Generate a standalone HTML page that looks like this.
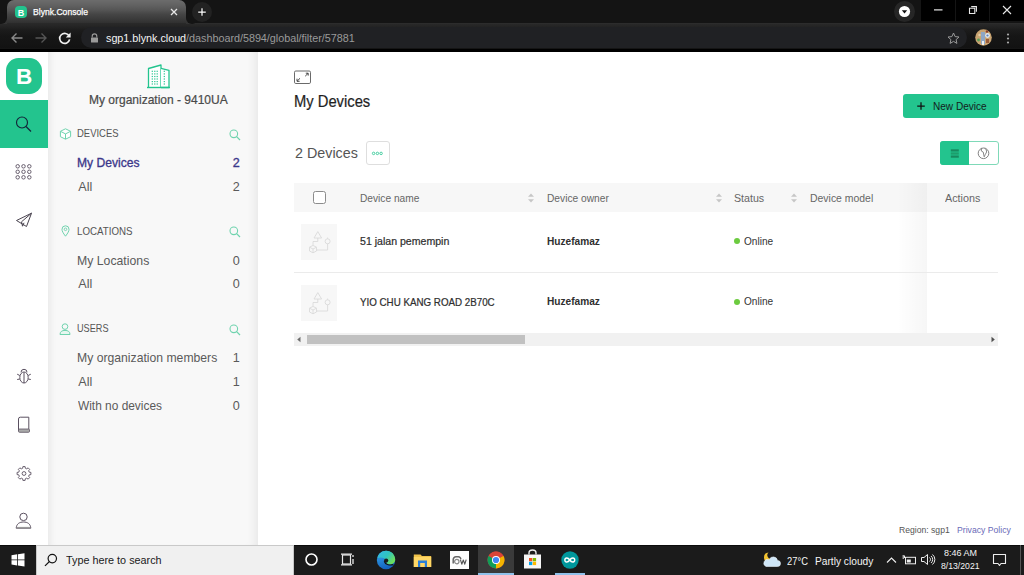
<!DOCTYPE html>
<html><head><meta charset="utf-8"><title>Blynk.Console</title>
<style>
html,body{margin:0;padding:0;width:1024px;height:575px;overflow:hidden;background:#fff;font-family:"Liberation Sans", sans-serif;}
.r{position:absolute;box-sizing:content-box;}
svg.r{overflow:visible}
.t{position:absolute;white-space:nowrap;font-family:"Liberation Sans", sans-serif;}
</style></head><body>
<div class="r" style="left:0px;top:0px;width:1024px;height:24px;background:#141414"></div>
<div class="r" style="left:7px;top:0px;width:179px;height:25px;border-radius:7px 7px 0 0;background:linear-gradient(#6c6c6c 0px,#626262 5px,#555 10px,#464646 14px,#3a3a3a 19px,#2c2c2c 25px)"></div>
<div class="r" style="left:0px;top:23px;width:1024px;height:26px;background:linear-gradient(#2a2a2a 0px,#252525 3px,#1c1c1c 7px,#161616 13px,#121212 26px)"></div>
<div class="r" style="left:0px;top:23px;width:7px;height:1px;background:#2c2c2c"></div>
<div class="r" style="left:186px;top:23px;width:838px;height:1px;background:#2c2c2c"></div>
<div class="r" style="left:0px;top:48px;width:1024px;height:1px;background:#151515"></div>
<div class="r" style="left:0px;top:49px;width:1024px;height:3px;background:#000"></div>
<div class="r" style="left:1px;top:18px;width:6px;height:6px;background:#333"></div>
<div class="r" style="left:-5px;top:12px;width:12px;height:12px;border-radius:50%;background:#141414"></div>
<div class="r" style="left:186px;top:18px;width:6px;height:6px;background:#333"></div>
<div class="r" style="left:186px;top:12px;width:12px;height:12px;border-radius:50%;background:#141414"></div>
<svg class="r" style="left:15px;top:6px;" width="12" height="12" viewBox="0 0 12 12"><rect x="0" y="0" width="12" height="12" rx="4" fill="#23c48e"/><text x="6" y="9.6" font-family="Liberation Sans" font-weight="700" font-size="9" fill="#fff" text-anchor="middle">B</text></svg>
<div class="t" style="left:33.10px;top:6.80px;font-size:9.8px;line-height:9.8px;color:#ffffff;font-weight:400;transform:scaleX(0.8769);transform-origin:0 0;-webkit-text-stroke:0.25px #fff">Blynk.Console</div>
<svg class="r" style="left:170px;top:8px;" width="8" height="8" viewBox="0 0 8 8"><path d="M1 1L7 7M7 1L1 7" stroke="#e8e8e8" stroke-width="1.3"/></svg>
<svg class="r" style="left:192px;top:2px;" width="20" height="20" viewBox="0 0 20 20"><circle cx="10" cy="10" r="10" fill="#222"/><path d="M10 6.2V13.8M6.2 10H13.8" stroke="#000" stroke-width="2.6" opacity="0.5"/><path d="M10 6.2V13.8M6.2 10H13.8" stroke="#fff" stroke-width="1.25"/></svg>
<svg class="r" style="left:894px;top:1px;" width="21" height="21" viewBox="0 0 21 21"><circle cx="10.5" cy="10.5" r="10.5" fill="#262626"/><circle cx="10.5" cy="10.5" r="5.6" fill="#fff"/><path d="M7.8 9.2H13.2L10.5 12.6Z" fill="#111"/></svg>
<div class="r" style="left:921px;top:0px;width:103px;height:21px;background:#000"></div>
<div class="r" style="left:955px;top:0px;width:1px;height:21px;background:#151515"></div>
<div class="r" style="left:989px;top:0px;width:1px;height:21px;background:#151515"></div>
<svg class="r" style="left:934px;top:9px;" width="9" height="2" viewBox="0 0 9 2"><rect x="0" y="0.3" width="8.5" height="1.2" fill="#e8e8e8"/></svg>
<svg class="r" style="left:967px;top:5px;" width="11" height="10" viewBox="0 0 11 10"><path d="M2.5 3.2H7.8V8.5H2.5Z" fill="none" stroke="#e8e8e8" stroke-width="1.1"/><path d="M4.2 1.6H9.4V6.8" fill="none" stroke="#e8e8e8" stroke-width="1.1"/></svg>
<svg class="r" style="left:1002px;top:5px;" width="10" height="10" viewBox="0 0 10 10"><path d="M1 1L9 9M9 1L1 9" stroke="#e8e8e8" stroke-width="1.1"/></svg>
<svg class="r" style="left:10px;top:31px;" width="14" height="14" viewBox="0 0 14 14"><path d="M12.5 7H2M6.5 2.5L2 7L6.5 11.5" fill="none" stroke="#8a8a8a" stroke-width="1.4"/></svg>
<svg class="r" style="left:34px;top:31px;" width="14" height="14" viewBox="0 0 14 14"><path d="M1.5 7H12M7.5 2.5L12 7L7.5 11.5" fill="none" stroke="#555" stroke-width="1.4"/></svg>
<svg class="r" style="left:58px;top:31px;" width="14" height="14" viewBox="0 0 14 14"><path d="M11.2 5.2A5 5 0 1 0 11.6 8.4" fill="none" stroke="#f0f0f0" stroke-width="1.7"/><path d="M12.6 1.6V6.4H7.8Z" fill="#f0f0f0"/></svg>
<div class="r" style="left:81px;top:27px;width:886px;height:21px;border-radius:11px;background:#202124"></div>
<svg class="r" style="left:90px;top:33px;" width="9" height="10" viewBox="0 0 9 10"><path d="M2.2 4.5V3.2A2.3 2.3 0 0 1 6.8 3.2V4.5" fill="none" stroke="#9a9a9a" stroke-width="1.1"/><rect x="1" y="4.4" width="7" height="5.2" rx="0.6" fill="#9a9a9a"/></svg>
<div class="t" style="left:106.00px;top:33.06px;font-size:10.8px;line-height:10.8px;color:#f4f4f4;font-weight:400;letter-spacing:-0.02px;"><span style="color:#f4f4f4">sgp1.blynk.cloud</span><span style="color:#9a9a9a">/dashboard/5894/global/filter/57881</span></div>
<svg class="r" style="left:947px;top:32px;" width="13" height="12" viewBox="0 0 13 12"><path d="M6.5 1L8.1 4.6L12 5L9.1 7.6L9.9 11.4L6.5 9.4L3.1 11.4L3.9 7.6L1 5L4.9 4.6Z" fill="none" stroke="#9a9a9a" stroke-width="1"/></svg>
<svg class="r" style="left:975px;top:29px;" width="17" height="17" viewBox="0 0 17 17"><defs><clipPath id="av"><circle cx="8.5" cy="8.5" r="8.3"/></clipPath></defs><g clip-path="url(#av)"><rect width="17" height="17" fill="#c9a472"/><rect x="6" y="3" width="4" height="12" fill="#8fa6c4"/><circle cx="12.5" cy="6.5" r="2.4" fill="#dfe8f2"/><circle cx="12.5" cy="6.5" r="1.1" fill="#5b7fb6"/><rect x="11" y="10" width="3" height="4" fill="#9a5a3a"/><circle cx="3.5" cy="11" r="1.4" fill="#5aa05a"/><circle cx="4.5" cy="6" r="1.2" fill="#e2cfa8"/><rect x="7" y="12" width="2" height="4" fill="#f0f0f0"/><circle cx="12" cy="2.5" r="1.2" fill="#8a3a2a"/></g></svg>
<svg class="r" style="left:1006px;top:33px;" width="4" height="11" viewBox="0 0 4 11"><circle cx="2" cy="1.5" r="1.1" fill="#aaa"/><circle cx="2" cy="5.5" r="1.1" fill="#aaa"/><circle cx="2" cy="9.5" r="1.1" fill="#aaa"/></svg>
<div class="r" style="left:0px;top:52px;width:1024px;height:493px;background:#fff"></div>
<div class="r" style="left:0px;top:52px;width:48px;height:493px;background:#fff"></div>
<svg class="r" style="left:6px;top:58px;" width="36" height="36" viewBox="0 0 36 36"><rect x="0" y="0" width="36" height="36" rx="12.5" fill="#23c48e"/><text x="18" y="26.2" font-family="Liberation Sans" font-weight="700" font-size="22.5" fill="#fff" text-anchor="middle">B</text></svg>
<div class="r" style="left:0px;top:100px;width:48px;height:48px;background:#23c48e"></div>
<svg class="r" style="left:14px;top:115px;" width="20" height="20" viewBox="0 0 20 20"><circle cx="8" cy="7.5" r="5.5" fill="none" stroke="#13263a" stroke-width="1.15"/><path d="M12 11.5L17 16.5" stroke="#13263a" stroke-width="1.2"/></svg>
<svg class="r" style="left:14px;top:163px;" width="20" height="18" viewBox="0 0 20 18"><circle cx="3.6999999999999993" cy="3.3000000000000114" r="1.75" fill="none" stroke="#625868" stroke-width="0.95"/><circle cx="3.6999999999999993" cy="8.800000000000011" r="1.75" fill="none" stroke="#625868" stroke-width="0.95"/><circle cx="3.6999999999999993" cy="14.300000000000011" r="1.75" fill="none" stroke="#625868" stroke-width="0.95"/><circle cx="9.5" cy="3.3000000000000114" r="1.75" fill="none" stroke="#625868" stroke-width="0.95"/><circle cx="9.5" cy="8.800000000000011" r="1.75" fill="none" stroke="#625868" stroke-width="0.95"/><circle cx="9.5" cy="14.300000000000011" r="1.75" fill="none" stroke="#625868" stroke-width="0.95"/><circle cx="15.3" cy="3.3000000000000114" r="1.75" fill="none" stroke="#625868" stroke-width="0.95"/><circle cx="15.3" cy="8.800000000000011" r="1.75" fill="none" stroke="#625868" stroke-width="0.95"/><circle cx="15.3" cy="14.300000000000011" r="1.75" fill="none" stroke="#625868" stroke-width="0.95"/></svg>
<svg class="r" style="left:15px;top:212px;" width="18" height="16" viewBox="0 0 18 16"><path d="M1.5 8.5L16.5 1.2L11.5 14.5Z M16.5 1.2L6.5 9.8L7.5 14.2L9 10.8" fill="none" stroke="#4a4450" stroke-width="1" stroke-linejoin="round"/></svg>
<svg class="r" style="left:16px;top:367px;" width="16" height="18" viewBox="0 0 16 18"><ellipse cx="8" cy="10.5" rx="4.2" ry="5.5" fill="none" stroke="#5a5060" stroke-width="1"/><path d="M5 5.3A3 3 0 0 1 11 5.3" fill="none" stroke="#5a5060" stroke-width="1"/><path d="M8 5.5V16M3.8 8.5L1.2 7.2M12.2 8.5L14.8 7.2M3.8 12L1.2 12.5M12.2 12L14.8 12.5" stroke="#5a5060" stroke-width="1"/></svg>
<svg class="r" style="left:16px;top:416px;" width="16" height="18" viewBox="0 0 16 18"><path d="M2.5 14.5V3A1.8 1.8 0 0 1 4.3 1.2H12.8V13" fill="none" stroke="#5a5060" stroke-width="1"/><rect x="2.5" y="13" width="11" height="3.3" rx="1" fill="#aaa" stroke="#5a5060" stroke-width="0.8"/></svg>
<svg class="r" style="left:15.7px;top:465.5px;" width="17" height="16" viewBox="0 0 17 16"><path d="M6.90 0.59 L9.10 0.59 L9.34 2.27 L10.75 2.85 L12.11 1.84 L13.66 3.39 L12.65 4.75 L13.23 6.16 L14.91 6.40 L14.91 8.60 L13.23 8.84 L12.65 10.25 L13.66 11.61 L12.11 13.16 L10.75 12.15 L9.34 12.73 L9.10 14.41 L6.90 14.41 L6.66 12.73 L5.25 12.15 L3.89 13.16 L2.34 11.61 L3.35 10.25 L2.77 8.84 L1.09 8.60 L1.09 6.40 L2.77 6.16 L3.35 4.75 L2.34 3.39 L3.89 1.84 L5.25 2.85 L6.66 2.27Z" fill="none" stroke="#5a5060" stroke-width="0.9" stroke-linejoin="round"/><circle cx="8" cy="7.5" r="1.9" fill="none" stroke="#5a5060" stroke-width="0.9"/></svg>
<svg class="r" style="left:15px;top:512px;" width="17" height="18" viewBox="0 0 17 18"><circle cx="8.5" cy="4.9" r="3.7" fill="none" stroke="#5a5060" stroke-width="1"/><path d="M1.2 16.2C1.5 11.8 4.5 10 8.5 10S15.5 11.8 15.8 16.2Z" fill="#fff" stroke="#5a5060" stroke-width="1"/><path d="M1.6 15.6H15.4" stroke="#9a9a9a" stroke-width="1.4"/></svg>
<div class="r" style="left:48px;top:52px;width:210px;height:493px;background:#f8f8f8;box-shadow:inset 7px 0 7px -5px rgba(0,0,0,0.07), inset -10px 0 10px -7px rgba(0,0,0,0.07)"></div>
<svg class="r" style="left:147px;top:64px;" width="24" height="25" viewBox="0 0 24 25"><path d="M1.5 23.5V4.5L14 1V23.5" fill="#fff" stroke="#23c48e" stroke-width="1.3" stroke-linejoin="round"/><path d="M14 4.3L22 6.3V23.5H14" fill="#fff" stroke="#23c48e" stroke-width="1.3" stroke-linejoin="round"/><path d="M0 23.5H23" stroke="#23c48e" stroke-width="1.4"/><rect x="4.7" y="6.7" width="1.2" height="1.2" fill="#23c48e"/><rect x="4.7" y="9.3" width="1.2" height="1.2" fill="#23c48e"/><rect x="4.7" y="11.9" width="1.2" height="1.2" fill="#23c48e"/><rect x="4.7" y="14.4" width="1.2" height="1.2" fill="#23c48e"/><rect x="4.7" y="17.0" width="1.2" height="1.2" fill="#23c48e"/><rect x="4.7" y="19.4" width="1.2" height="1.2" fill="#23c48e"/><rect x="7.2" y="6.7" width="1.2" height="1.2" fill="#23c48e"/><rect x="7.2" y="9.3" width="1.2" height="1.2" fill="#23c48e"/><rect x="7.2" y="11.9" width="1.2" height="1.2" fill="#23c48e"/><rect x="7.2" y="14.4" width="1.2" height="1.2" fill="#23c48e"/><rect x="7.2" y="17.0" width="1.2" height="1.2" fill="#23c48e"/><rect x="7.2" y="19.4" width="1.2" height="1.2" fill="#23c48e"/><rect x="9.6" y="6.7" width="1.2" height="1.2" fill="#23c48e"/><rect x="9.6" y="9.3" width="1.2" height="1.2" fill="#23c48e"/><rect x="9.6" y="11.9" width="1.2" height="1.2" fill="#23c48e"/><rect x="9.6" y="14.4" width="1.2" height="1.2" fill="#23c48e"/><rect x="9.6" y="17.0" width="1.2" height="1.2" fill="#23c48e"/><rect x="9.6" y="19.4" width="1.2" height="1.2" fill="#23c48e"/><rect x="16.7" y="6.7" width="1.2" height="1.2" fill="#23c48e"/><rect x="16.7" y="9.3" width="1.2" height="1.2" fill="#23c48e"/><rect x="16.7" y="11.9" width="1.2" height="1.2" fill="#23c48e"/><rect x="16.7" y="14.4" width="1.2" height="1.2" fill="#23c48e"/><rect x="16.7" y="17.0" width="1.2" height="1.2" fill="#23c48e"/><rect x="16.7" y="19.4" width="1.2" height="1.2" fill="#23c48e"/></svg>
<div class="t" style="left:88.86px;top:94.16px;font-size:12.8px;line-height:12.8px;color:#4a4a4a;font-weight:400;transform:scaleX(0.9375);transform-origin:0 0;-webkit-text-stroke:0.22px currentColor">My organization - 9410UA</div>
<svg class="r" style="left:59px;top:128px;" width="13" height="12" viewBox="0 0 13 12"><path d="M6.5 0.8L11.6 3.3V8.7L6.5 11.2L1.4 8.7V3.3Z" fill="#fff" stroke="#6fd3ae" stroke-width="1"/><path d="M1.6 3.4L6.5 5.9L11.4 3.4M6.5 5.9V11" fill="none" stroke="#6fd3ae" stroke-width="1"/></svg>
<div class="t" style="left:76.80px;top:128.19px;font-size:11px;line-height:11px;color:#555;font-weight:400;transform:scaleX(0.8591);transform-origin:0 0;">DEVICES</div>
<svg class="r" style="left:228.5px;top:128.5px;" width="12" height="12" viewBox="0 0 12 12"><circle cx="4.8" cy="4.8" r="3.8" fill="none" stroke="#6fd3ae" stroke-width="1.1"/><path d="M7.6 7.6L11 11" stroke="#6fd3ae" stroke-width="1.2"/></svg>
<svg class="r" style="left:61px;top:225px;" width="9" height="12" viewBox="0 0 9 12"><path d="M4.5 11.2C2 8 1 6 1 4.3A3.5 3.5 0 0 1 8 4.3C8 6 7 8 4.5 11.2Z" fill="none" stroke="#6fd3ae" stroke-width="1"/><circle cx="4.5" cy="4.3" r="1.3" fill="none" stroke="#6fd3ae" stroke-width="0.9"/></svg>
<div class="t" style="left:76.80px;top:225.69px;font-size:11px;line-height:11px;color:#555;font-weight:400;transform:scaleX(0.8844);transform-origin:0 0;">LOCATIONS</div>
<svg class="r" style="left:228.5px;top:226px;" width="12" height="12" viewBox="0 0 12 12"><circle cx="4.8" cy="4.8" r="3.8" fill="none" stroke="#6fd3ae" stroke-width="1.1"/><path d="M7.6 7.6L11 11" stroke="#6fd3ae" stroke-width="1.2"/></svg>
<svg class="r" style="left:59px;top:323px;" width="12" height="12" viewBox="0 0 12 12"><circle cx="6" cy="3.6" r="2.8" fill="none" stroke="#6fd3ae" stroke-width="1"/><path d="M1 11.5C1 8.6 3 7.4 6 7.4S11 8.6 11 11.5Z" fill="#e6f7f0" stroke="#6fd3ae" stroke-width="1"/></svg>
<div class="t" style="left:76.80px;top:322.89px;font-size:11px;line-height:11px;color:#555;font-weight:400;transform:scaleX(0.8306);transform-origin:0 0;">USERS</div>
<svg class="r" style="left:228.5px;top:323.5px;" width="12" height="12" viewBox="0 0 12 12"><circle cx="4.8" cy="4.8" r="3.8" fill="none" stroke="#6fd3ae" stroke-width="1.1"/><path d="M7.6 7.6L11 11" stroke="#6fd3ae" stroke-width="1.2"/></svg>
<div class="t" style="left:77.34px;top:156.93px;font-size:12.6px;line-height:12.6px;color:#3b378a;font-weight:400;transform:scaleX(0.9611);transform-origin:0 0;-webkit-text-stroke:0.32px currentColor">My Devices</div>
<div class="t" style="left:232.80px;top:156.93px;font-size:12.6px;line-height:12.6px;color:#3b378a;font-weight:400;letter-spacing:0px;-webkit-text-stroke:0.32px currentColor">2</div>
<div class="t" style="left:78.30px;top:181.03px;font-size:12.6px;line-height:12.6px;color:#5a5a5a;font-weight:400;letter-spacing:-0.05px;">All</div>
<div class="t" style="left:232.80px;top:181.03px;font-size:12.6px;line-height:12.6px;color:#5a5a5a;font-weight:400;letter-spacing:0px;">2</div>
<div class="t" style="left:77.33px;top:254.93px;font-size:12.6px;line-height:12.6px;color:#5a5a5a;font-weight:400;transform:scaleX(0.9739);transform-origin:0 0;">My Locations</div>
<div class="t" style="left:232.80px;top:254.93px;font-size:12.6px;line-height:12.6px;color:#5a5a5a;font-weight:400;letter-spacing:0px;">0</div>
<div class="t" style="left:78.30px;top:278.33px;font-size:12.6px;line-height:12.6px;color:#5a5a5a;font-weight:400;letter-spacing:-0.05px;">All</div>
<div class="t" style="left:232.80px;top:278.33px;font-size:12.6px;line-height:12.6px;color:#5a5a5a;font-weight:400;letter-spacing:0px;">0</div>
<div class="t" style="left:77.33px;top:352.03px;font-size:12.6px;line-height:12.6px;color:#5a5a5a;font-weight:400;transform:scaleX(0.9681);transform-origin:0 0;">My organization members</div>
<div class="t" style="left:232.80px;top:352.03px;font-size:12.6px;line-height:12.6px;color:#5a5a5a;font-weight:400;letter-spacing:0px;">1</div>
<div class="t" style="left:78.30px;top:375.83px;font-size:12.6px;line-height:12.6px;color:#5a5a5a;font-weight:400;letter-spacing:-0.05px;">All</div>
<div class="t" style="left:232.80px;top:375.83px;font-size:12.6px;line-height:12.6px;color:#5a5a5a;font-weight:400;letter-spacing:0px;">1</div>
<div class="t" style="left:78.30px;top:399.83px;font-size:12.6px;line-height:12.6px;color:#5a5a5a;font-weight:400;transform:scaleX(0.9447);transform-origin:0 0;">With no devices</div>
<div class="t" style="left:232.80px;top:399.83px;font-size:12.6px;line-height:12.6px;color:#5a5a5a;font-weight:400;letter-spacing:0px;">0</div>
<svg class="r" style="left:293px;top:70px;" width="19" height="15" viewBox="0 0 19 15"><rect x="1.5" y="1" width="16" height="12.5" rx="1.3" fill="#fff" stroke="#6a6a6a" stroke-width="1"/><path d="M12.2 6.2L15 3.4M12.8 3.2H15.2V5.6" fill="none" stroke="#333" stroke-width="0.9"/><path d="M7 8.3L4.2 11.1M4 8.7V11.3H6.6" fill="none" stroke="#333" stroke-width="0.9"/></svg>
<div class="t" style="left:293.88px;top:94.36px;font-size:16px;line-height:16px;color:#1f1f1f;font-weight:400;transform:scaleX(0.9219);transform-origin:0 0;-webkit-text-stroke:0.22px currentColor">My Devices</div>
<div class="t" style="left:294.60px;top:146.40px;font-size:14.3px;line-height:14.3px;color:#555;font-weight:400;transform:scaleX(1.0012);transform-origin:0 0;">2 Devices</div>
<div class="r" style="left:366px;top:141px;width:22px;height:22px;border:1px solid #dedede;border-radius:3px;background:#fff"></div>
<svg class="r" style="left:371px;top:151px;" width="14" height="5" viewBox="0 0 14 5"><circle cx="2.6" cy="2.4" r="1.25" fill="none" stroke="#23c48e" stroke-width="0.8"/><circle cx="6.4" cy="2.4" r="1.25" fill="none" stroke="#23c48e" stroke-width="0.8"/><circle cx="10.1" cy="2.4" r="1.25" fill="none" stroke="#23c48e" stroke-width="0.8"/></svg>
<div class="r" style="left:903px;top:94px;width:96px;height:24px;border-radius:3px;background:#23c48e"></div>
<svg class="r" style="left:916px;top:101px;" width="10" height="10" viewBox="0 0 10 10"><path d="M5 1.2V8.8M1.2 5H8.8" stroke="#111" stroke-width="1.25"/></svg>
<div class="t" style="left:932.60px;top:100.52px;font-size:11.2px;line-height:11.2px;color:#13211c;font-weight:400;transform:scaleX(0.8980);transform-origin:0 0;">New Device</div>
<div class="r" style="left:940px;top:141px;width:57px;height:22px;border:1px solid #7fd9b8;border-radius:3px;background:#fff"></div>
<div class="r" style="left:940px;top:141px;width:29px;height:24px;border-radius:3px 0 0 3px;background:#23c48e"></div>
<svg class="r" style="left:950px;top:149px;" width="10" height="9" viewBox="0 0 10 9"><rect x="0.8" y="0.3" width="8" height="2.2" fill="#178a5f"/><rect x="0.8" y="3.4" width="8" height="2.2" fill="#1c9e6c"/><rect x="0.8" y="6.5" width="8" height="2.2" fill="#178a5f"/></svg>
<svg class="r" style="left:977px;top:147px;" width="13" height="13" viewBox="0 0 13 13"><circle cx="6.5" cy="6.3" r="5.3" fill="none" stroke="#7a7a7a" stroke-width="0.95"/><path d="M4.5 1.2L4.3 4L6.2 5L7.2 9.8L8.3 7.5L9.6 5L9.2 2.6L7.8 1.4" fill="none" stroke="#7a7a7a" stroke-width="0.9" stroke-linejoin="round"/></svg>
<div class="r" style="left:294px;top:183px;width:704px;height:29px;background:#f7f7f7"></div>
<div class="r" style="left:313px;top:191px;width:11px;height:11px;border:1px solid #8c8c8c;border-radius:2.5px;background:#fff"></div>
<div class="t" style="left:360.00px;top:192.63px;font-size:10.6px;line-height:10.6px;color:#666;font-weight:400;transform:scaleX(0.9607);transform-origin:0 0;">Device name</div>
<div class="t" style="left:547.30px;top:192.63px;font-size:10.6px;line-height:10.6px;color:#666;font-weight:400;transform:scaleX(0.9636);transform-origin:0 0;">Device owner</div>
<div class="t" style="left:734.40px;top:192.63px;font-size:10.6px;line-height:10.6px;color:#666;font-weight:400;transform:scaleX(1.0055);transform-origin:0 0;">Status</div>
<div class="t" style="left:809.80px;top:192.63px;font-size:10.6px;line-height:10.6px;color:#666;font-weight:400;transform:scaleX(0.9855);transform-origin:0 0;">Device model</div>
<div class="t" style="left:945.00px;top:192.63px;font-size:10.6px;line-height:10.6px;color:#666;font-weight:400;transform:scaleX(1.0162);transform-origin:0 0;">Actions</div>
<svg class="r" style="left:527px;top:192px;" width="8" height="12" viewBox="0 0 8 12"><path d="M1 4.7L4 1.6L7 4.7Z" fill="#c6c6c6"/><path d="M1 7.3L4 10.4L7 7.3Z" fill="#c6c6c6"/></svg>
<svg class="r" style="left:714.5px;top:192px;" width="8" height="12" viewBox="0 0 8 12"><path d="M1 4.7L4 1.6L7 4.7Z" fill="#c6c6c6"/><path d="M1 7.3L4 10.4L7 7.3Z" fill="#c6c6c6"/></svg>
<svg class="r" style="left:789.5px;top:192px;" width="8" height="12" viewBox="0 0 8 12"><path d="M1 4.7L4 1.6L7 4.7Z" fill="#c6c6c6"/><path d="M1 7.3L4 10.4L7 7.3Z" fill="#c6c6c6"/></svg>
<div class="r" style="left:301px;top:224px;width:36px;height:36px;background:#f7f7f7"></div>
<svg class="r" style="left:301px;top:224px;" width="36" height="36" viewBox="0 0 36 36"><path d="M16.8 7.6L13 14H20.6Z" fill="none" stroke="#dadada" stroke-width="0.9"/><path d="M16.8 14V17.5H12V21" fill="none" stroke="#dadada" stroke-width="0.9"/><path d="M8.5 23.2L12 21.4L15.5 23.2V27L12 28.8L8.5 27Z M8.5 23.2L12 25L15.5 23.2M12 25V28.8" fill="none" stroke="#dadada" stroke-width="0.9"/><circle cx="26.6" cy="17.3" r="2.5" fill="none" stroke="#dadada" stroke-width="0.9"/><path d="M26.6 14.8V13.6M26.6 19.8V26H17" fill="none" stroke="#dadada" stroke-width="0.9"/><path d="M17 26H16" stroke="#dadada"/></svg>
<div class="t" style="left:360.00px;top:235.69px;font-size:11px;line-height:11px;color:#2f2f2f;font-weight:400;transform:scaleX(0.9609);transform-origin:0 0;-webkit-text-stroke:0.22px currentColor">51 jalan pemempin</div>
<div class="t" style="left:547.30px;top:235.69px;font-size:11px;line-height:11px;color:#2f2f2f;font-weight:700;transform:scaleX(0.9213);transform-origin:0 0;">Huzefamaz</div>
<svg class="r" style="left:733px;top:237px;" width="8" height="8" viewBox="0 0 8 8"><circle cx="4" cy="4" r="3" fill="#6ccb3f"/></svg>
<div class="t" style="left:744.00px;top:235.69px;font-size:11px;line-height:11px;color:#333;font-weight:400;transform:scaleX(0.9154);transform-origin:0 0;">Online</div>
<div class="r" style="left:301px;top:285px;width:36px;height:36px;background:#f7f7f7"></div>
<svg class="r" style="left:301px;top:285px;" width="36" height="36" viewBox="0 0 36 36"><path d="M16.8 7.6L13 14H20.6Z" fill="none" stroke="#dadada" stroke-width="0.9"/><path d="M16.8 14V17.5H12V21" fill="none" stroke="#dadada" stroke-width="0.9"/><path d="M8.5 23.2L12 21.4L15.5 23.2V27L12 28.8L8.5 27Z M8.5 23.2L12 25L15.5 23.2M12 25V28.8" fill="none" stroke="#dadada" stroke-width="0.9"/><circle cx="26.6" cy="17.3" r="2.5" fill="none" stroke="#dadada" stroke-width="0.9"/><path d="M26.6 14.8V13.6M26.6 19.8V26H17" fill="none" stroke="#dadada" stroke-width="0.9"/><path d="M17 26H16" stroke="#dadada"/></svg>
<div class="t" style="left:360.00px;top:296.83px;font-size:10.6px;line-height:10.6px;color:#2f2f2f;font-weight:400;transform:scaleX(0.9225);transform-origin:0 0;-webkit-text-stroke:0.22px currentColor">YIO CHU KANG ROAD 2B70C</div>
<div class="t" style="left:547.30px;top:296.49px;font-size:11px;line-height:11px;color:#2f2f2f;font-weight:700;transform:scaleX(0.9213);transform-origin:0 0;">Huzefamaz</div>
<svg class="r" style="left:733px;top:298px;" width="8" height="8" viewBox="0 0 8 8"><circle cx="4" cy="4" r="3" fill="#6ccb3f"/></svg>
<div class="t" style="left:744.00px;top:296.49px;font-size:11px;line-height:11px;color:#333;font-weight:400;transform:scaleX(0.9154);transform-origin:0 0;">Online</div>
<div class="r" style="left:897px;top:212px;width:30px;height:121px;background:linear-gradient(90deg,rgba(0,0,0,0),rgba(0,0,0,0.035))"></div>
<div class="r" style="left:927px;top:212px;width:71px;height:121px;background:#fff"></div>
<div class="r" style="left:294px;top:272px;width:704px;height:1px;background:#ebebeb"></div>
<div class="r" style="left:897px;top:183px;width:30px;height:29px;background:linear-gradient(90deg,rgba(0,0,0,0),rgba(0,0,0,0.03))"></div>
<div class="r" style="left:294px;top:333px;width:704px;height:13px;background:#f1f1f1"></div>
<div class="r" style="left:307px;top:335px;width:218px;height:9px;background:#c1c1c1"></div>
<svg class="r" style="left:296px;top:336px;" width="6" height="7" viewBox="0 0 6 7"><path d="M4.5 0.8L1.2 3.5L4.5 6.2Z" fill="#6e6e6e"/></svg>
<svg class="r" style="left:990px;top:336px;" width="6" height="7" viewBox="0 0 6 7"><path d="M1.5 0.8L4.8 3.5L1.5 6.2Z" fill="#505050"/></svg>
<div class="t" style="left:898.90px;top:525.68px;font-size:9px;line-height:9px;color:#555;font-weight:400;transform:scaleX(0.9560);transform-origin:0 0;">Region: sgp1</div>
<div class="t" style="left:957.40px;top:525.68px;font-size:9px;line-height:9px;color:#6a6ab8;font-weight:400;transform:scaleX(0.9608);transform-origin:0 0;">Privacy Policy</div>
<div class="r" style="left:0px;top:545px;width:1024px;height:30px;background:#1b1b1b"></div>
<div class="r" style="left:0px;top:545px;width:1024px;height:1px;background:#0c0c0c"></div>
<svg class="r" style="left:11px;top:553px;" width="14" height="14" viewBox="0 0 14 14"><path d="M0.5 2.2L6.2 1.3V6.5H0.5Z M7 1.2L13.5 0.2V6.5H7Z M0.5 7.3H6.2V12.5L0.5 11.6Z M7 7.3H13.5V13.6L7 12.6Z" fill="#fff"/></svg>
<div class="r" style="left:36px;top:545px;width:256px;height:29px;border:1px solid #c9c9c9;border-bottom:none;background:#f0f0f0"></div>
<svg class="r" style="left:44px;top:553px;" width="14" height="14" viewBox="0 0 14 14"><circle cx="8.3" cy="5.6" r="4.2" fill="none" stroke="#111" stroke-width="1.2"/><path d="M5.3 8.6L1 12.9" stroke="#111" stroke-width="1.3"/></svg>
<div class="t" style="left:66.40px;top:554.62px;font-size:11.2px;line-height:11.2px;color:#1a1a1a;font-weight:400;transform:scaleX(0.9670);transform-origin:0 0;">Type here to search</div>
<svg class="r" style="left:304px;top:552px;" width="15" height="15" viewBox="0 0 15 15"><circle cx="7.5" cy="7.5" r="5.5" fill="none" stroke="#fff" stroke-width="1.6"/></svg>
<svg class="r" style="left:340px;top:552px;" width="15" height="15" viewBox="0 0 15 15"><rect x="2.5" y="3" width="8" height="9" fill="none" stroke="#e8e8e8" stroke-width="1.2"/><path d="M1 2.2H12M1 12.8H12" stroke="#e8e8e8" stroke-width="1.2"/><path d="M13 3V5M13 7V12" stroke="#e8e8e8" stroke-width="1.3"/></svg>
<svg class="r" style="left:376px;top:550px;" width="20" height="20" viewBox="0 0 20 20"><defs><linearGradient id="eg" x1="0" y1="0" x2="0.3" y2="1"><stop offset="0" stop-color="#3aaef0"/><stop offset="1" stop-color="#1464c0"/></linearGradient><linearGradient id="eg2" x1="0" y1="0" x2="1" y2="0.6"><stop offset="0" stop-color="#35b8e8"/><stop offset="0.55" stop-color="#2fc4c0"/><stop offset="1" stop-color="#6ee05a"/></linearGradient></defs><circle cx="10" cy="10" r="9.2" fill="url(#eg)"/><path d="M1.4 8.2C2.5 3.5 6 0.8 10.2 0.8C15.5 0.8 19.2 4.8 19.2 9.6C19.2 12.6 16.8 14.6 13.6 14.4C11 14.2 9.6 12.4 10.8 10.4C9 7.8 4.5 6.8 1.4 8.2Z" fill="url(#eg2)"/><circle cx="10.2" cy="10.6" r="2.1" fill="#1c1c1c"/><path d="M8.3 11.2C9.2 14.2 13 15.6 17.4 14.6" fill="none" stroke="#141414" stroke-width="1.3"/></svg>
<svg class="r" style="left:413px;top:552px;" width="19" height="16" viewBox="0 0 19 16"><path d="M0.8 2.5H7.5L9 4H18.2V15H0.8Z" fill="#f0c24a"/><rect x="0.8" y="5" width="17.4" height="10" fill="#ffd766"/><path d="M5 8.5H14V15H11.8V11H7.2V15H5Z" fill="#2a7fd8"/></svg>
<svg class="r" style="left:450px;top:551px;" width="19" height="18" viewBox="0 0 19 18"><rect x="0" y="0" width="19" height="18" fill="#fcfcfc"/><path d="M3.2 12.5V8.6A2.8 2.8 0 0 1 6 5.8H8.4A2.4 2.4 0 0 1 10.8 8.2" fill="none" stroke="#666" stroke-width="1.5"/><circle cx="6.8" cy="10.6" r="2.2" fill="none" stroke="#888" stroke-width="1.2"/><path d="M10.4 8.6L11.8 13.2L13.3 9L14.8 13.2L16.2 8.6" fill="none" stroke="#555" stroke-width="1.1" stroke-linejoin="round"/></svg>
<div class="r" style="left:478px;top:545px;width:36px;height:28px;background:#3a3a3a"></div>
<div class="r" style="left:478px;top:573px;width:36px;height:2px;background:#8fc1ea"></div>
<svg class="r" style="left:487px;top:551px;" width="18" height="18" viewBox="0 0 18 18"><circle cx="9" cy="9" r="8.5" fill="#db4437"/><path d="M9 9L1.64 4.75A8.5 8.5 0 0 0 9 17.5Z" fill="#0f9d58"/><path d="M9 9L9 17.5A8.5 8.5 0 0 0 16.36 4.75Z" fill="#f4b400"/><path d="M9 9L16.36 4.75A8.5 8.5 0 0 0 1.64 4.75Z" fill="#db4437"/><circle cx="9" cy="9" r="4" fill="#fff"/><circle cx="9" cy="9" r="3.1" fill="#4285f4"/></svg>
<svg class="r" style="left:523px;top:550px;" width="19" height="19" viewBox="0 0 19 19"><path d="M6 4.5V3A3.5 3 0 0 1 13 3V4.5" fill="none" stroke="#eee" stroke-width="1.4"/><rect x="1" y="4.5" width="17" height="14" fill="#f7f7f7"/><rect x="6" y="8" width="3.3" height="3.3" fill="#f25022"/><rect x="9.8" y="8" width="3.3" height="3.3" fill="#7fba00"/><rect x="6" y="11.8" width="3.3" height="3.3" fill="#00a4ef"/><rect x="9.8" y="11.8" width="3.3" height="3.3" fill="#ffb900"/></svg>
<svg class="r" style="left:561px;top:551px;" width="18" height="18" viewBox="0 0 18 18"><circle cx="9" cy="9" r="8.7" fill="#00979c"/><path d="M8.7 9C7.5 7.2 6 6.7 4.8 7.2C3.5 7.8 3.5 10.2 4.8 10.8C6 11.3 7.5 10.8 8.7 9C10 7.2 11.5 6.7 12.8 7.2C14 7.8 14 10.2 12.8 10.8C11.5 11.3 10 10.8 8.7 9Z" fill="none" stroke="#fff" stroke-width="1.5"/></svg>
<div class="r" style="left:555px;top:573px;width:30px;height:2px;background:#8fc1ea"></div>
<svg class="r" style="left:762px;top:551px;" width="19" height="17" viewBox="0 0 19 17"><path d="M6.5 1.5A4.8 4.8 0 1 0 11.5 7.2A3.8 3.8 0 0 1 6.5 1.5Z" fill="#f2c230"/><path d="M4 15.5H15.5A3 3 0 0 0 15.5 9.5A4.3 4.3 0 0 0 7.2 8.8A3.4 3.4 0 0 0 4 15.5Z" fill="#cfe6f7" stroke="#e8f2fa" stroke-width="0.6"/></svg>
<div class="t" style="left:786.50px;top:555.83px;font-size:10.6px;line-height:10.6px;color:#f5f5f5;font-weight:400;transform:scaleX(0.8826);transform-origin:0 0;">27°C</div>
<div class="t" style="left:815.30px;top:555.83px;font-size:10.6px;line-height:10.6px;color:#f5f5f5;font-weight:400;transform:scaleX(0.9617);transform-origin:0 0;">Partly cloudy</div>
<svg class="r" style="left:886px;top:556px;" width="11" height="8" viewBox="0 0 11 8"><path d="M1 6.5L5.5 2L10 6.5" fill="none" stroke="#eee" stroke-width="1.1"/></svg>
<svg class="r" style="left:902px;top:554px;" width="15" height="11" viewBox="0 0 15 11"><rect x="3.5" y="3.3" width="10" height="6.5" fill="none" stroke="#eee" stroke-width="1"/><rect x="4.8" y="5.5" width="4" height="3" fill="#eee"/><path d="M1.2 1V5M2.5 1.5V4" stroke="#eee" stroke-width="1"/></svg>
<svg class="r" style="left:920px;top:553px;" width="15" height="13" viewBox="0 0 15 13"><path d="M1.5 4.5H4L7.5 1.5V11.5L4 8.5H1.5Z" fill="none" stroke="#eee" stroke-width="1"/><path d="M9.5 4.5A2.5 2.5 0 0 1 9.5 8.5M11 3A4.5 4.5 0 0 1 11 10M12.5 1.5A6.5 6.5 0 0 1 12.5 11.5" fill="none" stroke="#eee" stroke-width="1"/></svg>
<div class="t" style="left:943.60px;top:548.53px;font-size:9.3px;line-height:9.3px;color:#f5f5f5;font-weight:400;transform:scaleX(0.9652);transform-origin:0 0;">8:46 AM</div>
<div class="t" style="left:940.80px;top:562.13px;font-size:9.3px;line-height:9.3px;color:#f5f5f5;font-weight:400;transform:scaleX(0.9323);transform-origin:0 0;">8/13/2021</div>
<svg class="r" style="left:992px;top:553px;" width="15" height="14" viewBox="0 0 15 14"><path d="M1.5 1.5H13.5V10.5H9L7.5 12.5L6 10.5H1.5Z" fill="none" stroke="#eee" stroke-width="1.1" stroke-linejoin="round"/></svg>
<div class="r" style="left:1020px;top:545px;width:1px;height:30px;background:#555"></div>
</body></html>
